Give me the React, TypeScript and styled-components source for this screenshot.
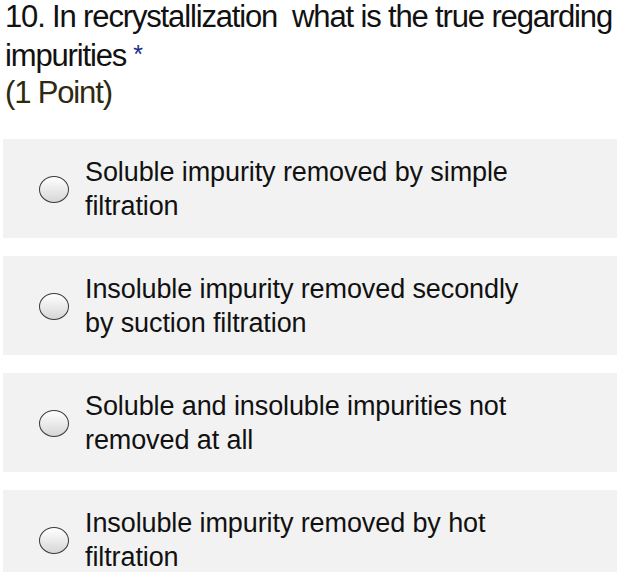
import styled, { createGlobalStyle } from "styled-components";

const GlobalStyle = createGlobalStyle`
  html, body {
    margin: 0;
    padding: 0;
    background: #ffffff;
  }
  body {
    font-family: "Liberation Sans", Arial, sans-serif;
    color: #111111;
  }
`;

const Page = styled.div`
  width: 617px;
  height: 572px;
  overflow: hidden;
  box-sizing: border-box;
  padding: 0 0 0 3px;
`;

const Question = styled.div`
  margin-top: -2px;
  padding-left: 2px;
  font-size: 31px;
  line-height: 37.5px;
  letter-spacing: -1.15px;
  height: 141px;
`;

const Title = styled.div``;

const Required = styled.span`
  color: #1c2a8c;
  font-size: 25px;
  letter-spacing: 0;
  margin-left: 7px;
  vertical-align: 3px;
`;

const Points = styled.div`
  color: #2e2a10;
`;

const Options = styled.div`
  display: flex;
  flex-direction: column;
  gap: 18px;
`;

const Option = styled.label`
  display: flex;
  align-items: center;
  gap: 16px;
  height: 99px;
  padding-left: 36px;
  background: #f2f2f2;
`;

const Radio = styled.span`
  flex: none;
  width: 30px;
  height: 27px;
  margin-top: 2px;
  box-sizing: border-box;
  border-radius: 50%;
  border: 1.5px solid #3a3a3a;
  background: linear-gradient(180deg, #ffffff 0%, #d6d6d6 100%);
`;

const OptionText = styled.div`
  font-size: 27px;
  line-height: 34px;
  max-width: 450px;
  letter-spacing: -0.1px;
  color: #111111;
`;

const answers = [
  "Soluble impurity removed by simple filtration",
  "Insoluble impurity removed secondly by suction filtration",
  "Soluble and insoluble impurities not removed at all",
  "Insoluble impurity removed by hot filtration",
];

export default function App() {
  return (
    <Page>
      <GlobalStyle />
      <Question>
        <Title>
          10. In recrystallization&nbsp; what is the true regarding impurities
          <Required>*</Required>
        </Title>
        <Points>(1 Point)</Points>
      </Question>
      <Options>
        {answers.map((a) => (
          <Option key={a}>
            <Radio />
            <OptionText>{a}</OptionText>
          </Option>
        ))}
      </Options>
    </Page>
  );
}
